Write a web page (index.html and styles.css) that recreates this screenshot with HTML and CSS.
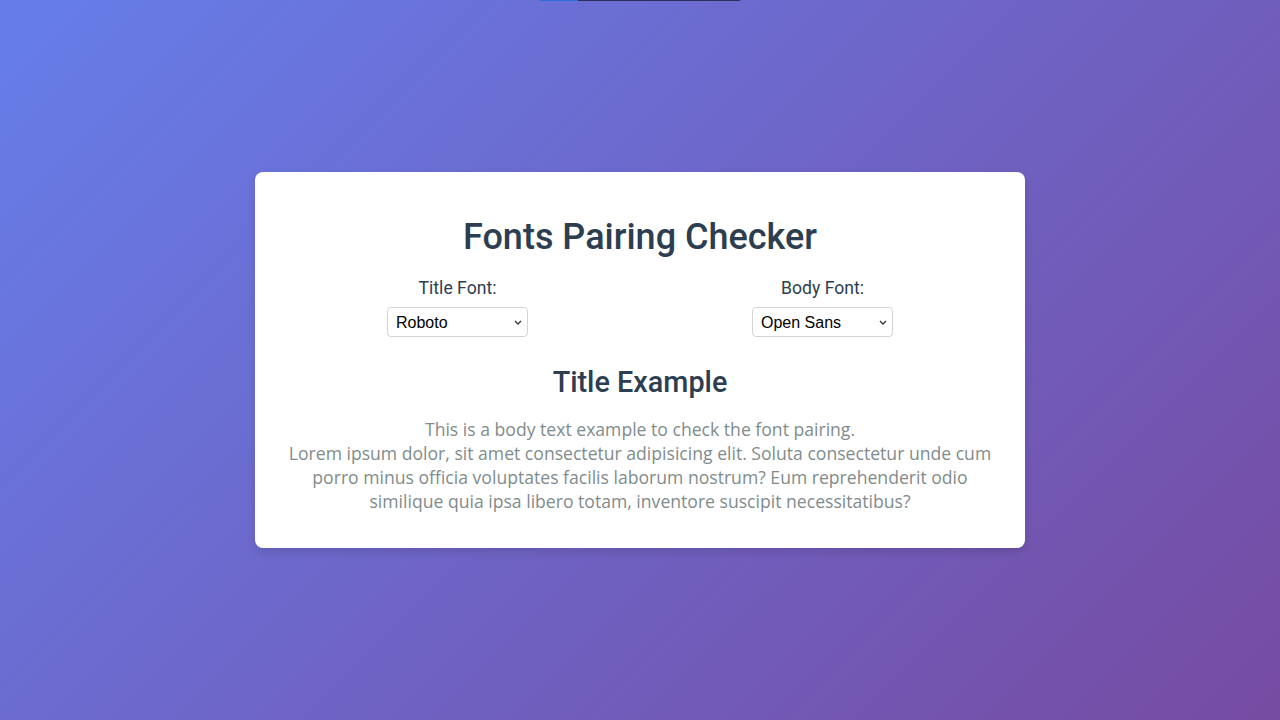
FILE: index.html
```html
<!DOCTYPE html>
<html lang="en">

<head>
    <meta charset="UTF-8">
    <title>Fonts Pairing Checker</title>
    <link rel="stylesheet" href="styles.css">
</head>

<body>

    <div class="top-line">
        <div class="done"></div>
        <div class="rest"></div>
    </div>

    <div class="container">
        <h1 class="title">Fonts Pairing Checker</h1>

        <div class="selectors">
            <div class="selector">
                <label for="titleFont">Title Font:</label>
                <div class="select-wrap">
                    <select id="titleFont">
                        <option>Roboto</option>
                        <option>Open Sans</option>
                        <option>Lato</option>
                        <option>Inter</option>
                    </select>
                    <svg class="chevron" width="8" height="5" viewBox="0 0 8 5">
                        <path d="M1 1 L4 4 L7 1" fill="none" stroke="#333" stroke-width="1.3" />
                    </svg>
                </div>
            </div>
            <div class="selector">
                <label for="bodyFont">Body Font:</label>
                <div class="select-wrap">
                    <select id="bodyFont">
                        <option>Open Sans</option>
                        <option>Roboto</option>
                        <option>Lato</option>
                        <option>Inter</option>
                    </select>
                    <svg class="chevron" width="8" height="5" viewBox="0 0 8 5">
                        <path d="M1 1 L4 4 L7 1" fill="none" stroke="#333" stroke-width="1.3" />
                    </svg>
                </div>
            </div>
        </div>

        <div class="preview">
            <h2 class="preview-title">Title Example</h2>
            <p class="preview-body">This is a body text example to check the font pairing.<br>
                Lorem ipsum dolor, sit amet consectetur adipisicing elit. Soluta consectetur unde cum porro minus
                officia voluptates facilis laborum nostrum? Eum reprehenderit odio similique quia ipsa libero totam,
                inventore suscipit necessitatibus?</p>
        </div>
    </div>

</body>

</html>
```

FILE: styles.css
```css
body {
    margin: 0;
    min-height: 100vh;
    display: flex;
    align-items: center;
    justify-content: center;
    background: linear-gradient(135deg, #667eea 0%, #764ba2 100%);
    font-family: Roboto, "Liberation Sans", sans-serif;
}

/* thin bar stuck at the very top */
.top-line {
    position: absolute;
    top: 0;
    left: 540px;
    width: 200px;
    height: 1px;
    display: flex;
}

.top-line .done {
    width: 38px;
    background-color: #2a6fdb;
}

.top-line .rest {
    flex: 1;
    background-color: #2b2f5a;
}

.container {
    width: 730px;
    background-color: white;
    padding: 20px 20px 19px;
    border-radius: 8px;
    box-shadow: 0 4px 10px rgba(0, 0, 0, 0.12);
    text-align: center;
}

.title {
    font-size: 36px;
    font-weight: 500;
    color: #2c3e50;
    margin: 24px 0 20px;
}

.selectors {
    display: flex;
    justify-content: space-around;
}

.selector {
    display: flex;
    flex-direction: column;
    align-items: center;
    gap: 9px;
}

.selector label {
    font-size: 1.1rem;
    color: #2c3e50;
}

.select-wrap {
    position: relative;
}

.select-wrap select {
    appearance: none;
    -webkit-appearance: none;
    display: block;
    width: 141px;
    height: 30px;
    padding: 0 8px;
    font-family: "Liberation Sans", Arial, sans-serif;
    font-size: 16px;
    color: #000;
    background-color: white;
    border: 1px solid #d4d4d4;
    border-radius: 4px;
}

.chevron {
    position: absolute;
    right: 6px;
    top: 13px;
    pointer-events: none;
}

.preview {
    margin-top: 28px;
}

.preview-title {
    font-size: 1.8rem;
    font-weight: 500;
    color: #2c3e50;
    margin: 0 0 18px;
}

.preview-body {
    font-family: "Open Sans", sans-serif;
    font-size: 1.1rem;
    line-height: 24px;
    color: #7f8c8d;
    margin: 0 0 16px;
}
```
